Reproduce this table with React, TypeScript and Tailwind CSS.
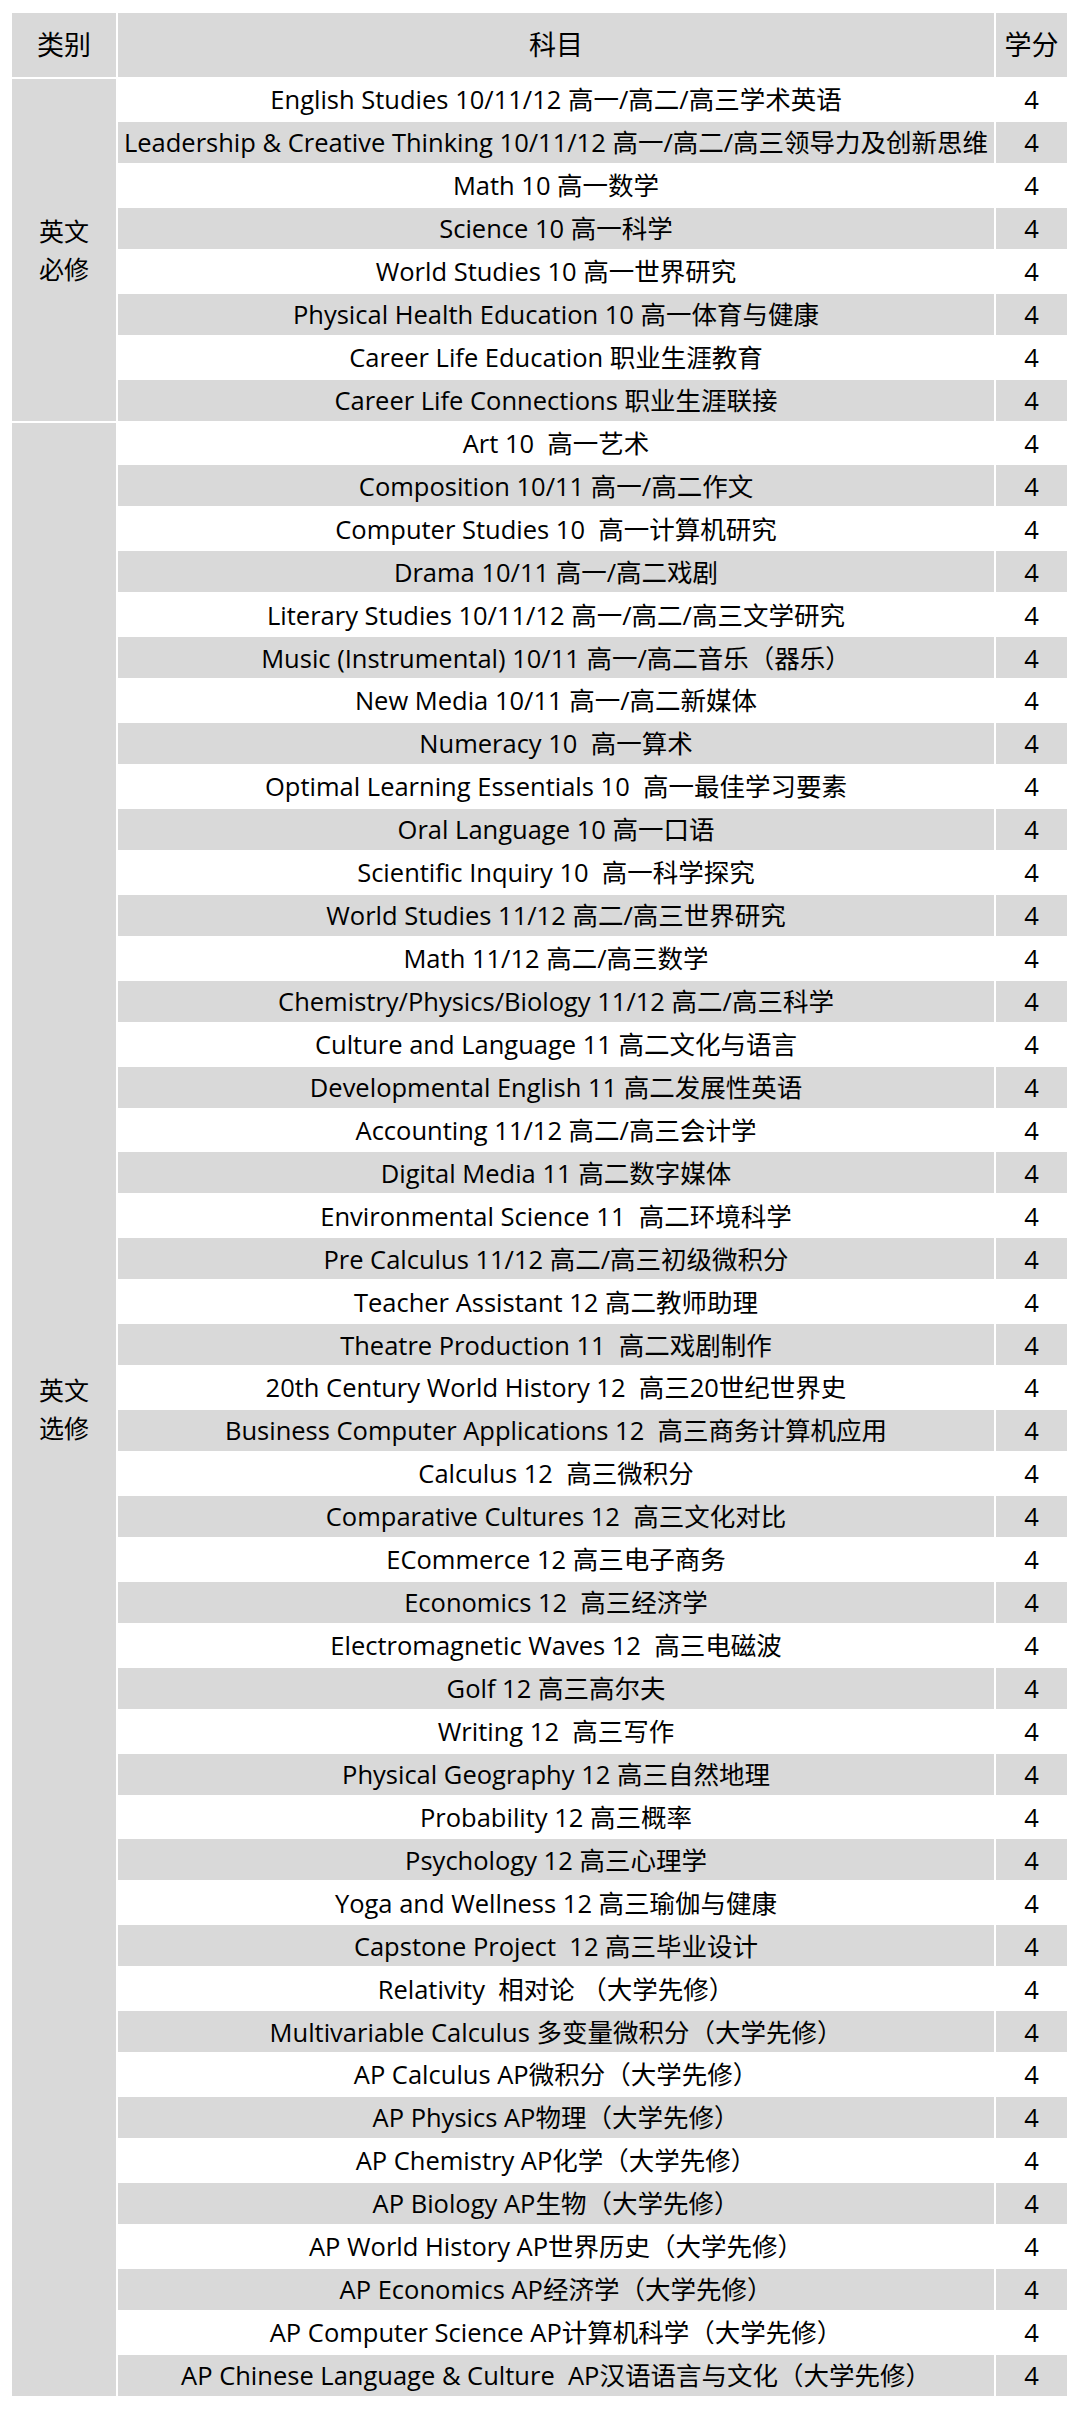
import React from 'react';

type Course = { name: string; credit: number };

const required: Course[] = [
  'English Studies 10/11/12 高一/高二/高三学术英语',
  'Leadership & Creative Thinking 10/11/12 高一/高二/高三领导力及创新思维',
  'Math 10 高一数学',
  'Science 10 高一科学',
  'World Studies 10 高一世界研究',
  'Physical Health Education 10 高一体育与健康',
  'Career Life Education 职业生涯教育',
  'Career Life Connections 职业生涯联接',
].map((name) => ({ name, credit: 4 }));

const electives: Course[] = [
  'Art 10  高一艺术',
  'Composition 10/11 高一/高二作文',
  'Computer Studies 10  高一计算机研究',
  'Drama 10/11 高一/高二戏剧',
  'Literary Studies 10/11/12 高一/高二/高三文学研究',
  'Music (Instrumental) 10/11 高一/高二音乐（器乐）',
  'New Media 10/11 高一/高二新媒体',
  'Numeracy 10  高一算术',
  'Optimal Learning Essentials 10  高一最佳学习要素',
  'Oral Language 10 高一口语',
  'Scientific Inquiry 10  高一科学探究',
  'World Studies 11/12 高二/高三世界研究',
  'Math 11/12 高二/高三数学',
  'Chemistry/Physics/Biology 11/12 高二/高三科学',
  'Culture and Language 11 高二文化与语言',
  'Developmental English 11 高二发展性英语',
  'Accounting 11/12 高二/高三会计学',
  'Digital Media 11 高二数字媒体',
  'Environmental Science 11  高二环境科学',
  'Pre Calculus 11/12 高二/高三初级微积分',
  'Teacher Assistant 12 高二教师助理',
  'Theatre Production 11  高二戏剧制作',
  '20th Century World History 12  高三20世纪世界史',
  'Business Computer Applications 12  高三商务计算机应用',
  'Calculus 12  高三微积分',
  'Comparative Cultures 12  高三文化对比',
  'ECommerce 12 高三电子商务',
  'Economics 12  高三经济学',
  'Electromagnetic Waves 12  高三电磁波',
  'Golf 12 高三高尔夫',
  'Writing 12  高三写作',
  'Physical Geography 12 高三自然地理',
  'Probability 12 高三概率',
  'Psychology 12 高三心理学',
  'Yoga and Wellness 12 高三瑜伽与健康',
  'Capstone Project  12 高三毕业设计',
  'Relativity  相对论 （大学先修）',
  'Multivariable Calculus 多变量微积分（大学先修）',
  'AP Calculus AP微积分（大学先修）',
  'AP Physics AP物理（大学先修）',
  'AP Chemistry AP化学（大学先修）',
  'AP Biology AP生物（大学先修）',
  'AP World History AP世界历史（大学先修）',
  'AP Economics AP经济学（大学先修）',
  'AP Computer Science AP计算机科学（大学先修）',
  'AP Chinese Language & Culture  AP汉语语言与文化（大学先修）',
].map((name) => ({ name, credit: 4 }));

const font = { fontFamily: '"Open Sans", "Noto Sans CJK SC", sans-serif' };

const CourseRow = ({ course, index }: { course: Course; index: number }) => {
  // every second row is shaded, counted across both groups
  const shade = index % 2 === 1 ? 'bg-[#d9d9d9]' : 'bg-white';
  return (
    <div className="flex gap-[2px] h-[40.95px]">
      <div className={`flex-1 flex items-center justify-center whitespace-pre ${shade}`}>{course.name}</div>
      <div className={`w-[71px] flex items-center justify-center ${shade}`}>{course.credit}</div>
    </div>
  );
};

const Group = ({ label, courses, offset }: { label: string[]; courses: Course[]; offset: number }) => (
  <div className="flex gap-[2px]">
    <div className="w-[104px] bg-[#d9d9d9] flex flex-col items-center justify-center leading-[38px] text-[25px]">
      {label.map((l) => (
        <span key={l}>{l}</span>
      ))}
    </div>
    <div className="flex-1 flex flex-col gap-[2px]">
      {courses.map((c, i) => (
        <CourseRow key={c.name} course={c} index={offset + i} />
      ))}
    </div>
  </div>
);

export default function App() {
  return (
    <div className="bg-white min-h-[2409px] pl-[12px] pt-[13px]" style={font}>
      <div className="w-[1055px] flex flex-col gap-[2px] text-[25.5px] text-black">
        <div className="flex gap-[2px] h-[64px] text-[27px]">
          <div className="w-[104px] bg-[#d9d9d9] flex items-center justify-center">类别</div>
          <div className="flex-1 bg-[#d9d9d9] flex items-center justify-center">科目</div>
          <div className="w-[71px] bg-[#d9d9d9] flex items-center justify-center">学分</div>
        </div>
        <Group label={['英文', '必修']} courses={required} offset={0} />
        <Group label={['英文', '选修']} courses={electives} offset={required.length} />
      </div>
    </div>
  );
}
